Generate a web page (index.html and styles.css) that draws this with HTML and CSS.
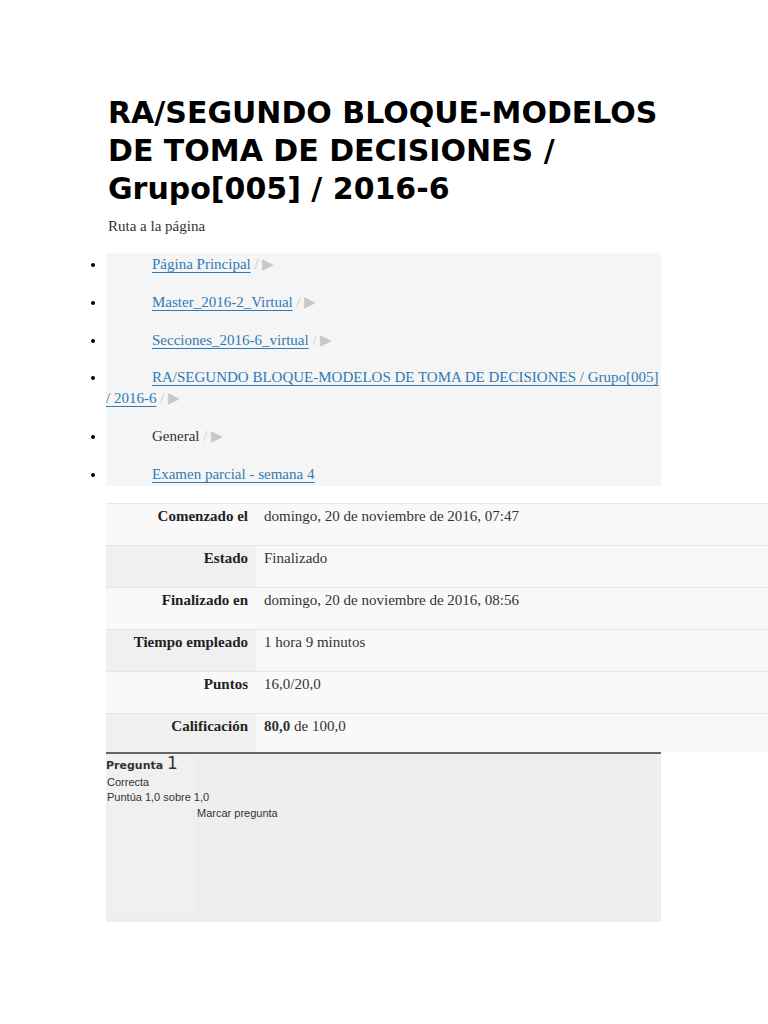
FILE: index.html
```
<!DOCTYPE html>
<html lang="es">
<head>
<meta charset="utf-8">
<title>Examen parcial - semana 4</title>
<link rel="stylesheet" href="styles.css">
</head>
<body>
<div class="page">
  <h1 class="title">RA/SEGUNDO BLOQUE-MODELOS DE TOMA DE DECISIONES / Grupo[005] / 2016-6</h1>
  <p class="route">Ruta a la página</p>
  <ul class="crumbs">
    <li><a href="#">Página Principal</a><span class="sep"> / ▶</span></li>
    <li><a href="#">Master_2016-2_Virtual</a><span class="sep"> / ▶</span></li>
    <li><a href="#">Secciones_2016-6_virtual</a><span class="sep"> / ▶</span></li>
    <li><a href="#">RA/SEGUNDO BLOQUE-MODELOS DE TOMA DE DECISIONES / Grupo[005] / 2016-6</a><span class="sep"> / ▶</span></li>
    <li>General<span class="sep"> / ▶</span></li>
    <li><a href="#">Examen parcial - semana 4</a></li>
  </ul>
  <table class="summary">
    <tr><th>Comenzado el</th><td>domingo, 20 de noviembre de 2016, 07:47</td></tr>
    <tr class="alt"><th>Estado</th><td>Finalizado</td></tr>
    <tr><th>Finalizado en</th><td>domingo, 20 de noviembre de 2016, 08:56</td></tr>
    <tr class="alt"><th>Tiempo empleado</th><td>1 hora 9 minutos</td></tr>
    <tr><th>Puntos</th><td>16,0/20,0</td></tr>
    <tr class="alt last"><th>Calificación</th><td><b>80,0</b> de 100,0</td></tr>
  </table>
  <div class="question">
    <div class="info">
      <h3 class="qno">Pregunta <span class="num">1</span></h3>
      <div class="state">Correcta</div>
      <div class="grade">Puntúa 1,0 sobre 1,0</div>
      <div class="flag">Marcar pregunta</div>
    </div>
  </div>
</div>
</body>
</html>
```
FILE: styles.css
```
html { overflow-x: hidden; }
body {
  margin: 0;
  background: #ffffff;
  font-family: "Liberation Serif", "Times New Roman", serif;
  color: #333333;
}
.page {
  padding: 94px 0 0 106px;
}
.title {
  margin: 0 0 0 2px;
  width: 580px;
  font-family: "DejaVu Sans", sans-serif;
  font-weight: bold;
  font-size: 30px;
  line-height: 38px;
  color: #000000;
}
.route {
  margin: 8px 0 0 2px;
  font-size: 15px;
  line-height: 21px;
  color: #333333;
}
.crumbs {
  margin: 16px 0 0 0;
  padding: 1px 0 1px 0;
  width: 555px;
  background: #f5f5f5;
  list-style: disc outside;
  font-size: 15px;
  line-height: 21px;
}
.crumbs li {
  text-indent: 46px;
  margin: 0 0 16.8px 0;
  color: #333333;
}
.crumbs li:last-child { margin-bottom: 0; }
.crumbs li::marker { color: #000000; }
.crumbs a {
  color: #2f7bb5;
  text-decoration: underline;
  text-underline-offset: 3px;
}
.sep { color: #c8c8c8; }
.summary {
  margin-top: 17px;
  width: 720px;
  border-collapse: collapse;
  font-size: 15px;
  line-height: 21px;
}
.summary tr { height: 42px; }
.summary tr.last { height: 39px; }
.summary th, .summary td {
  vertical-align: top;
  padding: 2px 8px 0 8px;
  border-top: 1px solid #e6e6e6;
  background: #f9f9f9;
}
.summary th {
  width: 134px;
  text-align: right;
  font-weight: bold;
  color: #222222;
}
.summary td { color: #333333; }
.summary tr.alt th { background: #f0f0f0; }
.question {
  width: 555px;
  height: 168px;
  border-top: 2px solid #666666;
  background: #eeeeee;
  font-family: "Liberation Sans", Arial, sans-serif;
  font-size: 11px;
  color: #333333;
}
.info {
  width: 90px;
  height: 160px;
  background: #f0f0f0;
}
.qno {
  margin: 0;
  padding-top: 0;
  font-family: "DejaVu Sans", sans-serif;
  font-size: 11px;
  line-height: 18px;
  font-weight: bold;
  color: #333333;
}
.num {
  font-size: 17px;
  font-weight: normal;
}
.state, .grade {
  line-height: 15px;
  white-space: nowrap;
  padding-left: 1px;
}
.flag {
  margin-left: 91px;
  line-height: 17px;
  white-space: nowrap;
}
```
